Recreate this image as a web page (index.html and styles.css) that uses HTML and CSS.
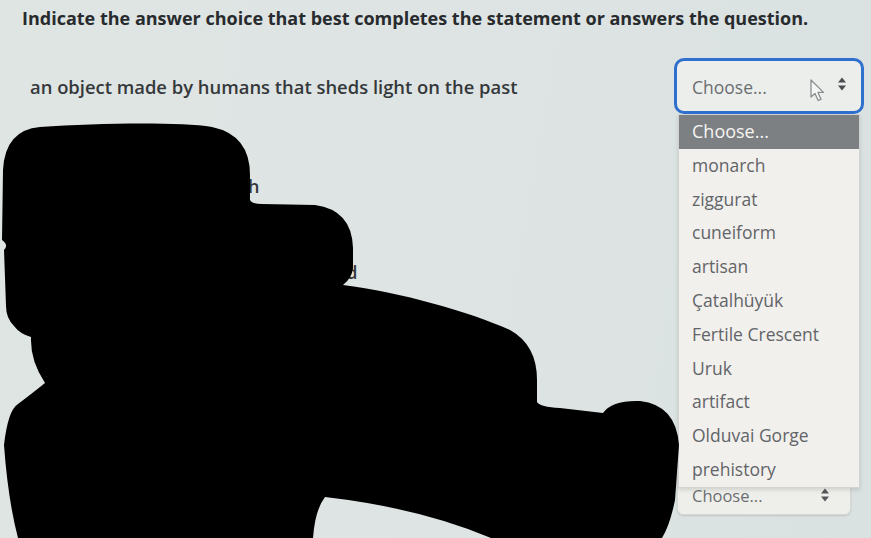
FILE: index.html
```html
<!DOCTYPE html>
<html lang="en">
<head>
<meta charset="utf-8">
<title>Quiz</title>
<link rel="stylesheet" href="styles.css">
</head>
<body>
<div class="page">
  <h1 class="title">Indicate the answer choice that best completes the statement or answers the question.</h1>
  <div class="questions">
    <div class="q q1">
      <p class="q-text">an object made by humans that sheds light on the past</p>
      <div class="select-wrap">
        <div class="select active">
          <span class="select-label">Choose...</span>
          <svg class="cursor" width="20" height="24" viewBox="0 0 20 24"><path d="M2 1 L2 18 L6 14.5 L9.2 21.5 L12 20.3 L9 13.4 L14.5 13.4 Z" fill="#f6f6f4" stroke="#8a8d90" stroke-width="1.3" stroke-linejoin="round"/></svg>
          <svg class="updown" width="10" height="16" viewBox="0 0 10 16"><path d="M5 1.5 L9 6.5 L1 6.5 Z M5 14.5 L9 9.5 L1 9.5 Z" fill="#4a4d50"/></svg>
        </div>
        <ul class="menu">
          <li class="menu-item selected">Choose...</li>
          <li class="menu-item">monarch</li>
          <li class="menu-item">ziggurat</li>
          <li class="menu-item">cuneiform</li>
          <li class="menu-item">artisan</li>
          <li class="menu-item">Çatalhüyük</li>
          <li class="menu-item">Fertile Crescent</li>
          <li class="menu-item">Uruk</li>
          <li class="menu-item">artifact</li>
          <li class="menu-item">Olduvai Gorge</li>
          <li class="menu-item">prehistory</li>
        </ul>
      </div>
    </div>
    <div class="q q2"><p class="q-text frag frag-h">h</p></div>
    <div class="q q3"><p class="q-text frag frag-d">ed</p></div>
    <div class="q q4">
      <div class="select small">
        <span class="select-label">Choose...</span>
        <svg class="updown" width="10" height="16" viewBox="0 0 10 16"><path d="M5 1.5 L9 6.5 L1 6.5 Z M5 14.5 L9 9.5 L1 9.5 Z" fill="#55585b"/></svg>
      </div>
    </div>
  </div>
</div>
<svg class="redaction" width="871" height="538" viewBox="0 0 871 538">
  <path d="M40 127 C100 123 180 122 212 127 Q250 135 250 175 L250 200 Q252 204 262 204 L315 205 Q352 210 353 248 L353 268 Q352 278 343 285 C400 292 470 312 510 330 Q537 345 537 380 L537 402 Q540 407 560 408 L603 413 Q612 400 640 401 Q676 405 679 445 L675 500 Q670 525 662 538 L491 538 Q420 508 325 497 Q315 510 313 538 L18 538 Q8 500 4 445 Q8 410 18 404 Q30 395 45 383 Q30 360 31 337 Q20 334 14 326 Q6 318 6 306 L4 250 Q9 245 2 240 L3 170 Q5 130 40 127 Z" fill="#000"/>
</svg>
</body>
</html>
```

FILE: styles.css
```css
html, body {
  margin: 0;
  padding: 0;
}
body {
  width: 871px;
  height: 538px;
  overflow: hidden;
  position: relative;
  background: linear-gradient(100deg, #dfe5e3 0%, #dde4e3 50%, #dae1e1 100%);
  font-family: "Open Sans", "Noto Sans", sans-serif;
  color: #2d3033;
}
.page {
  padding: 6px 0 0 22px;
}
.title {
  margin: 0;
  font-size: 18px;
  font-weight: 700;
  line-height: 24px;
  letter-spacing: 0;
  color: #282b2e;
}
.questions {
  display: flex;
  flex-direction: column;
  margin-top: 28px;
}
.q {
  display: flex;
  align-items: center;
  justify-content: space-between;
}
.q1 {
  height: 56px;
  padding-left: 8px;
  padding-right: 7px;
}
.q-text {
  margin: 0;
  font-size: 18.4px;
  font-weight: 600;
  color: #35383b;
}
.select-wrap {
  position: relative;
}
.select {
  box-sizing: border-box;
  display: flex;
  align-items: center;
  background: #eceeec;
  border-radius: 10px;
}
.select.active {
  width: 190px;
  height: 56px;
  border: 3px solid #2f6fce;
  padding: 0 14px 0 15px;
}
.select-label {
  font-size: 17.5px;
  color: #6b6e71;
  flex: 1;
  margin-top: 2px;
}
.cursor {
  margin-right: 8px;
  margin-top: 10px;
}
.updown {
  margin-top: -4px;
}
.menu {
  position: absolute;
  top: 56px;
  left: 4px;
  width: 180px;
  margin: 0;
  padding: 0;
  list-style: none;
  background: #f1f0ed;
  border: 1px solid #d2d4d2;
  box-shadow: 0 2px 4px rgba(0,0,0,0.12);
  z-index: 5;
}
.menu-item {
  height: 33.8px;
  line-height: 33.8px;
  padding-left: 13px;
  font-size: 17.5px;
  color: #626468;
}
.menu-item.selected {
  background: #7d8082;
  color: #f5f5f3;
  font-size: 18px;
}
.q2 {
  height: 34px;
  margin-top: 55px;
}
.frag {
  font-size: 18px;
}
.frag-h {
  padding-left: 226px;
}
.q3 {
  height: 34px;
  margin-top: 52px;
}
.frag-d {
  padding-left: 314px;
}
.q4 {
  margin-top: 180px;
  justify-content: flex-end;
  padding-right: 20px;
}
.select.small {
  width: 174px;
  height: 46px;
  padding: 0 14px 0 14px;
  border: 1px solid #d6d8d6;
  box-shadow: 0 1px 2px rgba(0,0,0,0.12);
  background: #eeeeeb;
  border-radius: 6px;
}
.select.small .select-label {
  margin-top: 6px;
  font-size: 16.5px;
}
.select.small .updown {
  margin-top: 6px;
  margin-right: 6px;
}
.redaction {
  position: absolute;
  left: 0;
  top: 0;
  z-index: 10;
  pointer-events: none;
}
```
